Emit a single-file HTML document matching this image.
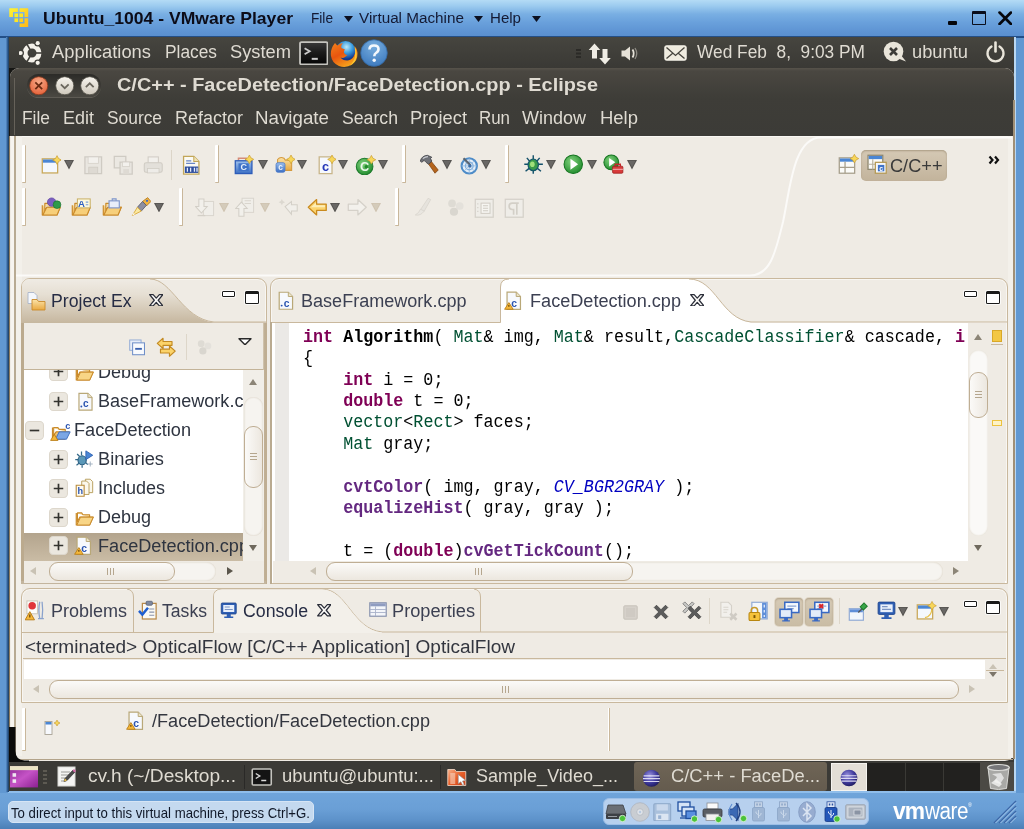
<!DOCTYPE html>
<html><head><meta charset="utf-8"><title>Ubuntu_1004 - VMware Player</title>
<style>
*{box-sizing:border-box;margin:0;padding:0}
html,body{width:1024px;height:829px;overflow:hidden}
html{background:#6198d2}
#root{position:absolute;left:0;top:0;width:1024px;height:829px;filter:blur(0.5px)}
body{background:#6198d2;font-family:"Liberation Sans",sans-serif;position:relative}
.a{position:absolute}
.t{position:absolute;white-space:pre;transform-origin:0 50%;display:block}
#vmtitle{left:0;top:0;width:1024px;height:37px;background:linear-gradient(#b4dbf5 0px,#9ccbef 6px,#79afe3 14px,#6aa1dc 22px,#5d93d3 32px,#5a8fcf 36px)}
#guest{left:8px;top:37px;width:1007px;height:755px;background:#3c3b37;overflow:hidden}
#panel{left:0;top:0;width:1007px;height:31px;background:linear-gradient(#46453f,#3a3935)}
#ewin{left:2px;top:31px;width:1004px;height:693px;background:#efebe4;border-radius:9px 9px 9px 9px;overflow:hidden}
#etitle{left:0;top:0;width:1004px;height:67.6px;background:linear-gradient(#57534b 0,#4a4741 3px,#3e3d38 30px,#3c3b37 100%)}
#tbar{left:0;top:724px;width:1007px;height:31px;background:#3b3a36}
.grip{position:absolute;width:4px;height:38px;background:#fff;border-right:1px solid #c9b79b;border-bottom:1px solid #c9b79b;border-radius:1px}
.code{position:absolute;left:303.4px;font-family:"Liberation Mono",monospace;font-size:18.8px;line-height:22px;white-space:pre;transform-origin:0 50%;transform:scaleX(0.8899);color:#000}
.k{color:#7f0055;font-weight:bold}.ty{color:#005032}.fn{color:#642880;font-weight:bold}.b{font-weight:bold}.en{color:#0000c0;font-style:italic}
.panelbox{position:absolute;border:1px solid #c5b59c;background:#efebe4}
</style></head><body><div id="root">
<div id="vmtitle" class="a"></div>
<div class="a" style="left:0;top:36px;width:1024px;height:1.5px;background:#234f88"></div>
<div id="guest" class="a">
  <div id="panel" class="a"></div>
  <div class="a" style="left:0;top:31px;width:14px;height:724px;background:#161614"></div>
  <div id="ewin" class="a">
    <div id="etitle" class="a"></div>
  </div>
  <div id="tbar" class="a"></div>
</div>
<!-- guest light edge -->
<div class="a" style="left:1014px;top:37px;width:2px;height:756px;background:#b9d7f2"></div>
<div class="a" style="left:8px;top:791px;width:1008px;height:2px;background:#8fbdea"></div>

<!-- everything below is in page coordinates -->
<div id="ov" class="a" style="left:0;top:0;width:1024px;height:829px">
<!-- content top highlight -->
<div class="a" style="left:10px;top:135.6px;width:1003px;height:1.6px;background:#f9f7f3"></div>
<div class="a" style="left:14px;top:78px;width:1.2px;height:57px;background:#66625a"></div>
<!-- eclipse window left/right edges -->
<div class="a" style="left:5.5px;top:37px;width:3.5px;height:755px;background:linear-gradient(90deg,#5b8fca,#2c5a8f 55%,#1d3a58)"></div>
<div class="a" style="left:8.7px;top:136px;width:1.8px;height:620px;background:#8a7a5e"></div>
<div class="a" style="left:10.5px;top:136px;width:3.5px;height:620px;background:#f7f4ef"></div>
<div class="a" style="left:14px;top:136px;width:1.5px;height:620px;background:#b8aa92"></div>
<div class="a" style="left:15.5px;top:136px;width:6px;height:620px;background:#f3f0ea"></div>
<div class="a" style="left:1008px;top:136px;width:5px;height:622px;background:#f3f0ea"></div>
<div class="a" style="left:1013px;top:100px;width:1.5px;height:659px;background:#a08f76"></div>
<div class="a" style="left:16px;top:758.5px;width:997px;height:1.5px;background:#b3a38a"></div>
<!-- perspective curve -->
<svg class="a" style="left:0;top:130px" width="1024" height="150" viewBox="0 130 1024 150">
 <path d="M16 275.5 L750 275.5 C771 275.5 776 250 783 222 C790 190 793 137.5 821 137.5 L1012 137.5" fill="none" stroke="#fbfaf8" stroke-width="2"/>
</svg>
<!-- toolbar grips -->
<div class="grip" style="left:22px;top:145px"></div>
<div class="grip" style="left:215px;top:145px"></div>
<div class="grip" style="left:402px;top:145px"></div>
<div class="grip" style="left:505px;top:145px"></div>
<div class="grip" style="left:22px;top:188px"></div>
<div class="grip" style="left:179px;top:188px"></div>
<div class="grip" style="left:395px;top:188px"></div>
<div class="a" style="left:171px;top:150px;width:1px;height:30px;background:#dcd5c8"></div>
<!-- C/C++ perspective button -->
<div class="a" style="left:861px;top:150px;width:86px;height:31px;border-radius:5px;background:linear-gradient(#d5c9b5,#c2b39b);box-shadow:inset 0 1px 2px #a89a82"></div>

<!-- ===== Project Explorer panel ===== -->
<div class="a" style="left:21px;top:278px;width:246px;height:306px;border:1px solid #c9b89d;border-radius:9px 9px 0 0;background:#efebe4;box-shadow:inset 0 0 0 1px #f8f6f2"></div>
<svg class="a" style="left:22px;top:279px" width="244" height="44" viewBox="0 0 244 44">
 <defs><linearGradient id="tg" x1="0" y1="0" x2="0" y2="1"><stop offset="0" stop-color="#efebe4"/><stop offset="0.35" stop-color="#e6dfd3"/><stop offset="1" stop-color="#c6b79f"/></linearGradient></defs>
 <path d="M0 44 L0 8 Q0 0 8 0 L128 0 C150 0 160 40 192 43.5 L244 43.5 L244 44 Z" fill="url(#tg)"/>
 <path d="M128 0 C150 0 160 40 192 43 L244 43" fill="none" stroke="#c9b89d" stroke-width="1"/>
</svg>
<div class="a" style="left:23px;top:368.5px;width:242px;height:1.5px;background:#c3b398"></div>
<div class="a" style="left:20.5px;top:323px;width:3.2px;height:261px;background:#bbaa8e"></div>
<div class="a" style="left:263px;top:323px;width:3.8px;height:261px;background:linear-gradient(90deg,#d6cbb8,#bfae93 40%)"></div>
<div class="a" style="left:21px;top:581px;width:245px;height:2.8px;background:#c3b59e"></div>
<div class="a" style="left:24px;top:370px;width:219px;height:191px;background:#fff"></div>
<div class="a" style="left:243px;top:370px;width:21px;height:191px;background:#f1eee8"></div>
<!-- selected row -->
<div class="a" style="left:24px;top:533px;width:219px;height:28px;background:linear-gradient(#b3a48d,#cabca5)"></div>
<!-- v scrollbar PE -->
<div class="a" style="left:244px;top:397px;width:19px;height:139px;border-radius:9px;background:#f6f4f0;box-shadow:inset 0 0 2px #cfc4b2"></div>
<div class="a" style="left:244px;top:426px;width:19px;height:62px;border-radius:9px;background:linear-gradient(90deg,#fbfaf8,#ece7df);border:1px solid #bfae94"></div>
<div class="a" style="left:250px;top:453px;width:7px;height:1px;background:#b5a68e;box-shadow:0 3px 0 #b5a68e,0 6px 0 #b5a68e"></div>
<div class="a" style="left:249px;top:379px;border:4px solid transparent;border-bottom:6px solid #8c8577;border-top:0"></div>
<div class="a" style="left:249px;top:545px;border:4px solid transparent;border-top:6px solid #6f695d;border-bottom:0"></div>
<!-- h scrollbar PE -->
<div class="a" style="left:24px;top:561px;width:240px;height:22px;background:#efebe4"></div>
<div class="a" style="left:49px;top:562px;width:167px;height:19px;border-radius:9px;background:#f6f4f0;box-shadow:inset 0 0 2px #cfc4b2"></div>
<div class="a" style="left:49px;top:562px;width:126px;height:19px;border-radius:9px;background:linear-gradient(#fbfaf8,#ece7df);border:1px solid #bfae94"></div>
<div class="a" style="left:107px;top:568px;width:1px;height:7px;background:#b5a68e;box-shadow:3px 0 0 #b5a68e,6px 0 0 #b5a68e"></div>
<div class="a" style="left:30px;top:567px;border:4px solid transparent;border-right:6px solid #c9c2b4;border-left:0"></div>
<div class="a" style="left:227px;top:567px;border:4px solid transparent;border-left:6px solid #5a554b;border-right:0"></div>

<!-- ===== Editor panel ===== -->
<div class="a" style="left:270px;top:278px;width:738px;height:306px;border:1px solid #c9b89d;border-radius:9px 9px 0 0;background:#efebe4;box-shadow:inset 0 0 0 1px #f8f6f2"></div>
<svg class="a" style="left:271px;top:279px" width="736" height="44" viewBox="0 0 736 44">
 <path d="M230 44 L230 8 Q230 0 238 0 L418 0 C445 0 450 40 480 43.5 L736 43.5 L736 44 Z" fill="#fff"/>
 <path d="M0 43.5 L229.5 43.5 L229.5 8 Q229.5 0 238 0 M418 0 C445 0 450 40 480 43 L736 43" fill="none" stroke="#c9b89d" stroke-width="1"/>
</svg>
<div class="a" style="left:273px;top:323px;width:732px;height:238px;background:#fff"></div>
<div class="a" style="left:275px;top:323px;width:14px;height:238px;background:#ebe9e6"></div>
<div class="a" style="left:968px;top:323px;width:38px;height:238px;background:#efebe4"></div>
<div class="a" style="left:272px;top:323px;width:2.5px;height:260px;background:#fff"></div>
<div class="a" style="left:272px;top:580.7px;width:734px;height:2.3px;background:#fff"></div>
<div class="a" style="left:270.300px;top:322px;width:1.7px;height:262px;background:#b9aa90"></div>
<!-- overview marks -->
<div class="a" style="left:992px;top:330px;width:10px;height:12px;background:#f3c743;border:1px solid #d9a827"></div>
<div class="a" style="left:991px;top:344px;width:12px;height:1px;background:#c9b89d"></div>
<div class="a" style="left:992px;top:420px;width:10px;height:6px;background:#fdf3c7;border:1.5px solid #ecc23f"></div>
<!-- v scrollbar editor -->
<div class="a" style="left:969px;top:350px;width:19px;height:186px;border-radius:9px;background:#faf9f7;box-shadow:inset 0 0 2px #d9d0c0"></div>
<div class="a" style="left:969px;top:372px;width:19px;height:46px;border-radius:9px;background:linear-gradient(90deg,#fbfaf8,#ece7df);border:1px solid #bfae94"></div>
<div class="a" style="left:975px;top:391px;width:7px;height:1px;background:#b5a68e;box-shadow:0 3px 0 #b5a68e,0 6px 0 #b5a68e"></div>
<div class="a" style="left:974px;top:334px;border:4px solid transparent;border-bottom:6px solid #8c8577;border-top:0"></div>
<div class="a" style="left:974px;top:545px;border:4px solid transparent;border-top:6px solid #6f695d;border-bottom:0"></div>
<!-- h scrollbar editor -->
<div class="a" style="left:273px;top:561px;width:732px;height:22px;background:#efebe4"></div>
<div class="a" style="left:326px;top:562px;width:617px;height:19px;border-radius:9px;background:#f6f4f0;box-shadow:inset 0 0 2px #cfc4b2"></div>
<div class="a" style="left:326px;top:562px;width:307px;height:19px;border-radius:9px;background:linear-gradient(#fbfaf8,#ece7df);border:1px solid #bfae94"></div>
<div class="a" style="left:475px;top:568px;width:1px;height:7px;background:#b5a68e;box-shadow:3px 0 0 #b5a68e,6px 0 0 #b5a68e"></div>
<div class="a" style="left:310px;top:567px;border:4px solid transparent;border-right:6px solid #c9c2b4;border-left:0"></div>
<div class="a" style="left:953px;top:567px;border:4px solid transparent;border-left:6px solid #8c8577;border-right:0"></div>

<!-- ===== Bottom panel ===== -->
<div class="a" style="left:21px;top:588px;width:987px;height:115px;border:1px solid #c9b89d;border-radius:9px 9px 0 0;background:#efebe4;box-shadow:inset 0 0 0 1px #f8f6f2"></div>
<svg class="a" style="left:22px;top:589px" width="985" height="44" viewBox="0 0 985 44">
 <path d="M0 43.5 L191.5 43.5 L191.5 8 Q191.5 0 200 0 L300 0 C325 0 330 40 360 43 L985 43" fill="none" stroke="#c9b89d" stroke-width="1"/>
 <path d="M111.5 43 L111.5 8 Q111.5 1 105 0 M458.5 43 L458.5 8 Q458.5 1 452 0" fill="none" stroke="#c9b89d" stroke-width="1"/>
 <path d="M192 44 L192 8 Q192 0.5 200 0.5 L300 0.5 C325 0.5 330 40 360 43.5 L360 44 Z" fill="#f3f0ea"/>
</svg>
<div class="a" style="left:23px;top:658px;width:983px;height:1px;background:#c9b89d"></div>
<div class="a" style="left:24px;top:660px;width:961px;height:19px;background:#fff"></div>
<div class="a" style="left:989px;top:664px;border:4px solid transparent;border-bottom:5px solid #c9c2b4;border-top:0"></div>
<div class="a" style="left:989px;top:672px;border:4px solid transparent;border-top:5px solid #7c766a;border-bottom:0"></div>
<div class="a" style="left:986px;top:670px;width:18px;height:1px;background:#c9b89d"></div>
<!-- h scrollbar console -->
<div class="a" style="left:49px;top:680px;width:910px;height:19px;border-radius:9px;background:linear-gradient(#fbfaf8,#ece7df);border:1px solid #bfae94"></div>
<div class="a" style="left:502px;top:686px;width:1px;height:7px;background:#b5a68e;box-shadow:3px 0 0 #b5a68e,6px 0 0 #b5a68e"></div>
<div class="a" style="left:33px;top:685px;border:4px solid transparent;border-right:6px solid #c9c2b4;border-left:0"></div>
<div class="a" style="left:969px;top:685px;border:4px solid transparent;border-left:6px solid #c9c2b4;border-right:0"></div>
<!-- status bar -->
<div class="grip" style="left:22px;top:708px;height:43px"></div>
<div class="a" style="left:608px;top:708px;width:2px;height:43px;background:#fff;border-right:1px solid #c9b79b"></div>

<svg class="a" style="left:8.5px;top:727px" width="20" height="35" viewBox="0 0 20 35"><path d="M0 0H6.500V24Q6.500 33 15.500 33.500H20V35H0Z" fill="#0b0b0a"/></svg>
<!-- ===== Taskbar ===== -->
<div class="a" style="left:634px;top:762px;width:193px;height:29px;background:linear-gradient(#6f6556,#645b4e);border-radius:3px"></div>
<div class="a" style="left:830.5px;top:763px;width:36.500px;height:28px;background:#e3ded6;border:1px solid #f5f3ef"></div>
<div class="a" style="left:867px;top:763px;width:113px;height:28px;background:#22211f"></div>
<div class="a" style="left:905px;top:763px;width:1px;height:28px;background:#3a3935"></div>
<div class="a" style="left:943px;top:763px;width:1px;height:28px;background:#3a3935"></div>
<div class="a" style="left:980px;top:762px;width:34px;height:29px;background:#4b4944"></div>
<div class="a" style="left:244px;top:765px;width:1px;height:24px;background:#2a2927"></div>
<div class="a" style="left:440px;top:765px;width:1px;height:24px;background:#2a2927"></div>
<div class="a" style="left:43px;top:770px;width:4px;height:2px;background:#5d5a52;box-shadow:0 4px 0 #5d5a52,0 8px 0 #5d5a52,0 12px 0 #5d5a52"></div>

<!-- ===== VMware status ===== -->
<div class="a" style="left:0;top:793px;width:1024px;height:36px;background:linear-gradient(#6fa4da 0,#6a9fd6 45%,#5d92ca 75%,#4b7fb6 100%)"></div>
<div class="a" style="left:8px;top:801px;width:306px;height:22px;border-radius:5px;background:#c4d9ef;border:1px solid #d6e5f5"></div>
<div class="a" style="left:603px;top:798px;width:266px;height:27px;border-radius:6px;background:#b7d0ee;border:1px solid #9dbfe6"></div>
<svg class="a" style="left:990px;top:795px" width="30" height="30" viewBox="0 0 30 30"><path d="M4 28 L26 6 M9 28 L26 11 M14 28 L26 16 M19 28 L26 21" stroke="#3d68a8" stroke-width="1.5"/><path d="M5.5 28 L26 7.5 M10.5 28 L26 12.5 M15.5 28 L26 17.5 M20.5 28 L26 22.5" stroke="#a9cdf0" stroke-width="1"/></svg>

<div class="a" style="left:289px;top:323px;width:679px;height:238px;overflow:hidden">
<div class="a" style="left:-289px;top:-323px;width:1024px;height:829px">
<div class="code" style="top:325.8px"><span class="k">int</span> <span class="b">Algorithm</span>( <span class="ty">Mat</span>&amp; img, <span class="ty">Mat</span>&amp; result,<span class="ty">CascadeClassifier</span>&amp; cascade, <span class="k">i</span></div>
<div class="code" style="top:347.2px">{</div>
<div class="code" style="top:368.6px">    <span class="k">int</span> i = 0;</div>
<div class="code" style="top:390px">    <span class="k">double</span> t = 0;</div>
<div class="code" style="top:411.4px">    <span class="ty">vector</span>&lt;<span class="ty">Rect</span>&gt; faces;</div>
<div class="code" style="top:432.8px">    <span class="ty">Mat</span> gray;</div>
<div class="code" style="top:475.6px">    <span class="fn">cvtColor</span>( img, gray, <span class="en">CV_BGR2GRAY</span> );</div>
<div class="code" style="top:497px">    <span class="fn">equalizeHist</span>( gray, gray );</div>
<div class="code" style="top:539.8px">    t = (<span class="k">double</span>)<span class="fn">cvGetTickCount</span>();</div>
</div></div>

<svg width="0" height="0" style="position:absolute"><defs>
<linearGradient id="gFold" x1="0" y1="0" x2="0" y2="1"><stop offset="0" stop-color="#fbe3a8"/><stop offset="1" stop-color="#e9a941"/></linearGradient>
<linearGradient id="gBlue" x1="0" y1="0" x2="0" y2="1"><stop offset="0" stop-color="#9dc0ec"/><stop offset="1" stop-color="#3c6fc4"/></linearGradient>
<radialGradient id="gGreen" cx="0.4" cy="0.35" r="0.7"><stop offset="0" stop-color="#7fd07a"/><stop offset="1" stop-color="#1f8a2c"/></radialGradient>
<radialGradient id="gOrb" cx="0.4" cy="0.3" r="0.8"><stop offset="0" stop-color="#b9b4ea"/><stop offset="0.5" stop-color="#4d47a8"/><stop offset="1" stop-color="#1d1a5c"/></radialGradient>
<linearGradient id="gPurp" x1="0" y1="0" x2="0" y2="1"><stop offset="0" stop-color="#c76ad0"/><stop offset="1" stop-color="#7a1f86"/></linearGradient>
</defs></svg>
<svg class="a" style="left:40.5px;top:154.5px" width="20.5" height="20.5" viewBox="0 0 16 16"><rect x="1" y="3" width="12" height="11" fill="#f4f8fd" stroke="#c9a85a" stroke-width="1"/><rect x="1.5" y="3.5" width="11" height="2.5" fill="#4a86d4"/><path d="M12.5 0.5l1.2 2.2 2.2 1.2-2.2 1.2-1.2 2.2-1.2-2.2-2.2-1.2 2.2-1.2z" fill="#f7d65a" stroke="#c8992a" stroke-width="0.5"/></svg>
<svg class="a" style="left:63.7px;top:160px" width="10" height="9.5" viewBox="0 0 10 9.500"><path d="M0 0h10l-5 9.500z" fill="#555350"/><path d="M1.500 0.800h7l-3.500 6.500z" fill="#ffffff" fill-opacity="0.12"/></svg>
<svg class="a" style="left:82.5px;top:155px" width="20.5" height="20.5" viewBox="0 0 16 16"><path d="M1.5 1.5h13v13h-13z" fill="#e9e6e0" stroke="#cfcbc3"/><rect x="4" y="1.5" width="8" height="5" fill="#f3f1ed" stroke="#d5d1c9" stroke-width="0.6"/><rect x="4.5" y="9.5" width="7" height="5" fill="#dedad3" stroke="#cfcbc3" stroke-width="0.6"/></svg>
<svg class="a" style="left:112.5px;top:155px" width="20.5" height="20.5" viewBox="0 0 16 16"><path d="M1 1h9v9h-9z" fill="#ebe8e2" stroke="#cfcbc3"/><path d="M5.5 5.5h9.5v9.5h-9.5z" fill="#e9e6e0" stroke="#cfcbc3"/><rect x="7.5" y="5.5" width="5.5" height="3.5" fill="#f3f1ed" stroke="#d5d1c9" stroke-width="0.6"/><rect x="8" y="11" width="4.5" height="4" fill="#dedad3"/></svg>
<svg class="a" style="left:142.5px;top:155px" width="20.5" height="20.5" viewBox="0 0 16 16"><rect x="4" y="1.5" width="8" height="5" fill="#f2f0ec" stroke="#d0ccc4" stroke-width="0.8"/><rect x="1" y="6" width="14" height="7.5" rx="1.5" fill="#e3e0da" stroke="#cfcbc3" stroke-width="0.8"/><rect x="3.5" y="10.5" width="9" height="3.5" fill="#eeece8" stroke="#d0ccc4" stroke-width="0.6"/></svg>
<svg class="a" style="left:180.5px;top:154.5px" width="20.5" height="20.5" viewBox="0 0 16 16"><path d="M2 1h8l4 4v10h-12z" fill="#fbfaf3" stroke="#c2a659" stroke-width="1"/><path d="M10 1v4h4" fill="#f0e3b4" stroke="#c2a659" stroke-width="0.8"/><path d="M4 4.5h4M4 6.5h7" stroke="#6a86c6" stroke-width="1"/><rect x="3" y="9" width="10.5" height="5" fill="#2f4f9e"/><path d="M5 10v3M7.5 10v3M10.5 10v3M12.5 10v3" stroke="#e6ecfa" stroke-width="1"/></svg>
<svg class="a" style="left:234px;top:154.5px" width="20.5" height="20.5" viewBox="0 0 16 16"><path d="M3.5 4.5v-2h6v2" fill="none" stroke="#d58b79" stroke-width="1.2"/><rect x="1" y="4.5" width="13" height="10" fill="url(#gBlue)" stroke="#2c5bb8" stroke-width="1"/><rect x="3.5" y="6.5" width="8" height="6" fill="#3f73c8"/><text x="7.5" y="12" font-family="Liberation Sans" font-weight="bold" font-size="7" fill="#e9f0fb" text-anchor="middle">C</text><path d="M12 0l1.2 2.2 2.2 1.2-2.2 1.2-1.2 2.2-1.2-2.2-2.2-1.2 2.2-1.2z" fill="#f7d65a" stroke="#c8992a" stroke-width="0.5"/></svg>
<svg class="a" style="left:257.5px;top:160px" width="10" height="9.5" viewBox="0 0 10 9.500"><path d="M0 0h10l-5 9.500z" fill="#555350"/><path d="M1.500 0.800h7l-3.500 6.500z" fill="#ffffff" fill-opacity="0.12"/></svg>
<svg class="a" style="left:274.5px;top:154.5px" width="20.5" height="20.5" viewBox="0 0 16 16"><path d="M2 3.5q2-2.5 5-1l1 1.5h5v8h-11z" fill="url(#gFold)" stroke="#d59a3e" stroke-width="0.8"/><rect x="0.8" y="6" width="7" height="7.5" rx="1.5" fill="url(#gBlue)" stroke="#4a79c9" stroke-width="0.6"/><text x="4.3" y="12" font-family="Liberation Sans" font-weight="bold" font-size="6.5" fill="#eef3fb" text-anchor="middle">c</text><path d="M12.5 0l1.2 2.2 2.2 1.2-2.2 1.2-1.2 2.2-1.2-2.2-2.2-1.2 2.2-1.2z" fill="#f7d65a" stroke="#c8992a" stroke-width="0.5"/></svg>
<svg class="a" style="left:297.4px;top:160px" width="10" height="9.5" viewBox="0 0 10 9.500"><path d="M0 0h10l-5 9.500z" fill="#555350"/><path d="M1.500 0.800h7l-3.500 6.500z" fill="#ffffff" fill-opacity="0.12"/></svg>
<svg class="a" style="left:315.5px;top:154.5px" width="20.5" height="20.5" viewBox="0 0 16 16"><path d="M2.5 1.5h10v13h-10z" fill="#f5f8fd" stroke="#c8b58a" stroke-width="1"/><text x="7.5" y="12.5" font-family="Liberation Sans" font-weight="bold" font-size="10" fill="#2436b8" text-anchor="middle">c</text><path d="M12.5 0l1.2 2.2 2.2 1.2-2.2 1.2-1.2 2.2-1.2-2.2-2.2-1.2 2.2-1.2z" fill="#f7d65a" stroke="#c8992a" stroke-width="0.5"/></svg>
<svg class="a" style="left:337.5px;top:160px" width="10" height="9.5" viewBox="0 0 10 9.500"><path d="M0 0h10l-5 9.500z" fill="#555350"/><path d="M1.500 0.800h7l-3.500 6.500z" fill="#ffffff" fill-opacity="0.12"/></svg>
<svg class="a" style="left:355px;top:154.5px" width="20.5" height="20.5" viewBox="0 0 16 16"><circle cx="7.5" cy="9" r="6.5" fill="url(#gGreen)" stroke="#1c7a2a" stroke-width="0.8"/><text x="7.5" y="12.6" font-family="Liberation Sans" font-weight="bold" font-size="10" fill="#eaf7ea" text-anchor="middle">C</text><circle cx="8.8" cy="9.2" r="1.3" fill="#1f8a2c"/><path d="M12.8 0.3l1.2 2.2 2.2 1.2-2.2 1.2-1.2 2.2-1.2-2.2-2.2-1.2 2.2-1.2z" fill="#f7d65a" stroke="#c8992a" stroke-width="0.5"/></svg>
<svg class="a" style="left:378px;top:160px" width="10" height="9.5" viewBox="0 0 10 9.500"><path d="M0 0h10l-5 9.500z" fill="#555350"/><path d="M1.500 0.800h7l-3.500 6.500z" fill="#ffffff" fill-opacity="0.12"/></svg>
<svg class="a" style="left:418.5px;top:153.5px" width="20.5" height="20.5" viewBox="0 0 16 16"><path d="M6.5 6.5l2-2 6.5 8-2.5 2.5z" fill="#b5651d" stroke="#7d4210" stroke-width="0.6"/><path d="M1 5.5q1-4 5.5-4.5l3.5 1.5-1 1 1 2-2.5 2.5-2-1.5-1.5-1.5-2 1.5z" fill="#6e7076" stroke="#3c3e44" stroke-width="0.6"/><path d="M3 3.5q2-1.5 4-1.5" stroke="#c9cbd1" stroke-width="0.9" fill="none"/></svg>
<svg class="a" style="left:442px;top:160px" width="10" height="9.5" viewBox="0 0 10 9.500"><path d="M0 0h10l-5 9.500z" fill="#555350"/><path d="M1.500 0.800h7l-3.500 6.500z" fill="#ffffff" fill-opacity="0.12"/></svg>
<svg class="a" style="left:459px;top:154.5px" width="20.5" height="20.5" viewBox="0 0 16 16"><circle cx="8" cy="8.5" r="6" fill="#e4eef8" stroke="#4e8cc8" stroke-width="1.6"/><circle cx="8" cy="8.5" r="3" fill="none" stroke="#7fb0de" stroke-width="1"/><path d="M8 2.5v12M2 8.5h12M4 4.5l8 8M12 4.5l-8 8" stroke="#8db5dc" stroke-width="0.6"/><path d="M3.5 2.5l5.5 5.5" stroke="#5a6470" stroke-width="1.6"/><circle cx="8.5" cy="8.5" r="1.3" fill="#3b6ea8"/></svg>
<svg class="a" style="left:481px;top:160px" width="10" height="9.5" viewBox="0 0 10 9.500"><path d="M0 0h10l-5 9.500z" fill="#555350"/><path d="M1.500 0.800h7l-3.500 6.500z" fill="#ffffff" fill-opacity="0.12"/></svg>
<svg class="a" style="left:523px;top:154px" width="20.5" height="20.5" viewBox="0 0 16 16"><path d="M8 1v3M3 3l2.5 3M13 3l-2.5 3M1 8h3M12 8h3.5M2 13.5l3-2.5M14 13.5l-3-2.5M8 13v2.5" stroke="#14506a" stroke-width="1.1"/><ellipse cx="8" cy="8.5" rx="4" ry="4.5" fill="#3a9a4a" stroke="#145a6a" stroke-width="1"/><ellipse cx="7.3" cy="8" rx="1.8" ry="2.2" fill="#9fe07a"/></svg>
<svg class="a" style="left:546px;top:160px" width="10" height="9.5" viewBox="0 0 10 9.500"><path d="M0 0h10l-5 9.500z" fill="#555350"/><path d="M1.500 0.800h7l-3.500 6.500z" fill="#ffffff" fill-opacity="0.12"/></svg>
<svg class="a" style="left:563px;top:154px" width="20.5" height="20.5" viewBox="0 0 16 16"><circle cx="8" cy="8" r="7.2" fill="url(#gGreen)" stroke="#14741f" stroke-width="0.8"/><path d="M5.8 3.8l6 4.2-6 4.2z" fill="#fff"/></svg>
<svg class="a" style="left:586.8px;top:160px" width="10" height="9.5" viewBox="0 0 10 9.500"><path d="M0 0h10l-5 9.500z" fill="#555350"/><path d="M1.500 0.800h7l-3.500 6.500z" fill="#ffffff" fill-opacity="0.12"/></svg>
<svg class="a" style="left:603px;top:154px" width="20.5" height="20.5" viewBox="0 0 16 16"><circle cx="6.5" cy="6.5" r="5.8" fill="url(#gGreen)" stroke="#14741f" stroke-width="0.8"/><path d="M4.8 3.2l4.8 3.3-4.8 3.3z" fill="#fff"/><path d="M9.5 9.5v-1.5h4v1.5" fill="none" stroke="#c62a2a" stroke-width="1.1"/><rect x="7.5" y="9.5" width="8" height="5.5" rx="0.8" fill="#d83a3a" stroke="#9c1a1a" stroke-width="0.6"/><rect x="7.5" y="11.5" width="8" height="1" fill="#f09a9a"/></svg>
<svg class="a" style="left:627px;top:160px" width="10" height="9.5" viewBox="0 0 10 9.500"><path d="M0 0h10l-5 9.500z" fill="#555350"/><path d="M1.500 0.800h7l-3.500 6.500z" fill="#ffffff" fill-opacity="0.12"/></svg>
<svg class="a" style="left:838px;top:154px" width="20.5" height="20.5" viewBox="0 0 16 16"><rect x="1" y="3" width="12" height="12" fill="#fbfbf8" stroke="#a79f8c" stroke-width="1"/><rect x="1.5" y="3.5" width="11" height="2.5" fill="#4a86d4"/><path d="M5.5 6v9M1 10.5h12" stroke="#a79f8c" stroke-width="1"/><path d="M12.8 0.2l1.2 2.2 2.2 1.2-2.2 1.2-1.2 2.2-1.2-2.2-2.2-1.2 2.2-1.2z" fill="#f7d65a" stroke="#c8992a" stroke-width="0.5"/></svg>
<svg class="a" style="left:866.5px;top:154px" width="20.5" height="20.5" viewBox="0 0 16 16"><rect x="0.8" y="1" width="11.5" height="11" fill="#fbfbf8" stroke="#8f8870" stroke-width="1"/><rect x="1.3" y="1.5" width="10.5" height="2.5" fill="#4a86d4"/><path d="M4.5 4v8M1 8h11" stroke="#b7b09c" stroke-width="0.9"/><rect x="6.5" y="6.5" width="8.5" height="8.5" fill="#f5f8fd" stroke="#b59a55" stroke-width="1"/><rect x="8.5" y="8.5" width="5" height="5" fill="#3f73c8"/><text x="11" y="13" font-family="Liberation Sans" font-weight="bold" font-size="5.5" fill="#fff" text-anchor="middle">c</text></svg>
<svg class="a" style="left:41px;top:196.5px" width="20.5" height="20.5" viewBox="0 0 16 16"><path d="M1 6.5v7.5h11.5l2.5-6h-10.5l-1.5 2.5v-5.5h3l1 1.5h5v1.5" fill="url(#gFold)" stroke="#c98a2a" stroke-width="0.9" stroke-linejoin="round"/><path d="M1.5 14l3-6h10.5l-2.5 6z" fill="#f7cf7a" stroke="#c98a2a" stroke-width="0.8"/><circle cx="8.3" cy="4" r="3.3" fill="#7b5fc0" stroke="#5a3fa0" stroke-width="0.5"/><circle cx="12.5" cy="6" r="3" fill="#2f9a4a" stroke="#1a7030" stroke-width="0.5"/></svg>
<svg class="a" style="left:71px;top:196.5px" width="20.5" height="20.5" viewBox="0 0 16 16"><path d="M1 6.5v7.5h11.5l2.5-6h-10.5l-1.5 2.5v-5.5h3l1 1.5h5v1.5" fill="url(#gFold)" stroke="#c98a2a" stroke-width="0.9" stroke-linejoin="round"/><path d="M1.5 14l3-6h10.5l-2.5 6z" fill="#f7cf7a" stroke="#c98a2a" stroke-width="0.8"/><rect x="5" y="1.5" width="10" height="7" fill="#fdf9e0" stroke="#c9b067" stroke-width="0.8"/><text x="8.2" y="8" font-family="Liberation Sans" font-weight="bold" font-size="7.5" fill="#2f5fc0" text-anchor="middle">A</text><path d="M11.5 4h2M11.5 6h2" stroke="#7aa0d8" stroke-width="0.8"/></svg>
<svg class="a" style="left:101.5px;top:196.5px" width="20.5" height="20.5" viewBox="0 0 16 16"><path d="M1 6.5v7.5h11.5l2.5-6h-10.5l-1.5 2.5v-5.5h3l1 1.5h5v1.5" fill="url(#gFold)" stroke="#c98a2a" stroke-width="0.9" stroke-linejoin="round"/><path d="M1.5 14l3-6h10.5l-2.5 6z" fill="#f7cf7a" stroke="#c98a2a" stroke-width="0.8"/><rect x="5.5" y="3" width="8" height="5.5" fill="#e8eefa" stroke="#7f97cc" stroke-width="0.9"/><path d="M8 3v-1.5h3v1.5" fill="none" stroke="#7f97cc" stroke-width="0.9"/></svg>
<svg class="a" style="left:130.5px;top:197px" width="20.5" height="20.5" viewBox="0 0 16 16"><path d="M9 3.5l4-3 2.5 3-3.5 3.5z" fill="#f0b340" stroke="#b97a1a" stroke-width="0.7"/><path d="M5 8l4-4.5 3 3-4 4.5z" fill="#8d8fa0" stroke="#5c5e70" stroke-width="0.7"/><path d="M1 14.5l4-6.5 3 3z" fill="#fbe9a0" stroke="#d8a83a" stroke-width="0.7"/><path d="M1 14.5l2-1-1-1z" fill="#fff"/><circle cx="12.5" cy="3" r="0.9" fill="#3a6ac8"/></svg>
<svg class="a" style="left:154px;top:202.5px" width="10" height="9.5" viewBox="0 0 10 9.500"><path d="M0 0h10l-5 9.500z" fill="#555350"/><path d="M1.500 0.800h7l-3.500 6.500z" fill="#ffffff" fill-opacity="0.12"/></svg>
<svg class="a" style="left:195px;top:197px" width="20.5" height="20.5" viewBox="0 0 16 16"><rect x="6.5" y="3.5" width="8" height="11" fill="#f0eee9" stroke="#dad6ce" stroke-width="0.8"/><path d="M3 1.5h4v6h2.5l-4.5 5-4.5-5h2.5z" fill="#f2f0eb" stroke="#d3cfc7" stroke-width="0.8"/><path d="M2 14.5h6" stroke="#d3cfc7" stroke-width="1"/></svg>
<svg class="a" style="left:219px;top:202.5px" width="10" height="9.5" viewBox="0 0 10 9.500"><path d="M0 0h10l-5 9.500z" fill="#cfc4b1"/><path d="M1.500 0.800h7l-3.500 6.500z" fill="#ffffff" fill-opacity="0.12"/></svg>
<svg class="a" style="left:235px;top:197px" width="20.5" height="20.5" viewBox="0 0 16 16"><rect x="5.5" y="1" width="9" height="11" fill="#f0eee9" stroke="#dad6ce" stroke-width="0.8"/><path d="M7.5 3h5M7.5 5h5" stroke="#d9d5cd" stroke-width="0.8"/><path d="M3 15h4v-6h2.5l-4.5-5-4.5 5h2.5z" fill="#f2f0eb" stroke="#d3cfc7" stroke-width="0.8"/></svg>
<svg class="a" style="left:259.5px;top:202.5px" width="10" height="9.5" viewBox="0 0 10 9.500"><path d="M0 0h10l-5 9.500z" fill="#cfc4b1"/><path d="M1.500 0.800h7l-3.500 6.500z" fill="#ffffff" fill-opacity="0.12"/></svg>
<svg class="a" style="left:277.5px;top:197px" width="20.5" height="20.5" viewBox="0 0 16 16"><path d="M6.5 9l5-4v2.5h4.5v5h-4.5v2.5z" fill="#f1efea" stroke="#d3cfc7" stroke-width="0.8" transform="translate(-1 -1.5)"/><path d="M3 1.5l.8 1.7 1.7.8-1.7.8-.8 1.7-.8-1.7-1.700-.8 1.700-.8z" fill="#dcd8d0"/></svg>
<svg class="a" style="left:307px;top:197px" width="20.5" height="20.5" viewBox="0 0 16 16"><path d="M1 8l6.500-6v3.500h7.500v5h-7.500v3.500z" fill="#fbd470" stroke="#c98a1e" stroke-width="1" stroke-linejoin="round"/><path d="M3 8l4-3.500v2h7v1.5z" fill="#fdeeb8"/></svg>
<svg class="a" style="left:330px;top:202.5px" width="10" height="9.5" viewBox="0 0 10 9.500"><path d="M0 0h10l-5 9.500z" fill="#555350"/><path d="M1.500 0.800h7l-3.500 6.500z" fill="#ffffff" fill-opacity="0.12"/></svg>
<svg class="a" style="left:346.5px;top:197px" width="20.5" height="20.5" viewBox="0 0 16 16"><path d="M15 8l-6.500-6v3.500h-7.500v5h7.500v3.500z" fill="#f3f1ec" stroke="#d5d1c9" stroke-width="1" stroke-linejoin="round"/></svg>
<svg class="a" style="left:370.5px;top:202.5px" width="10" height="9.5" viewBox="0 0 10 9.500"><path d="M0 0h10l-5 9.500z" fill="#cfc4b1"/><path d="M1.500 0.800h7l-3.500 6.500z" fill="#ffffff" fill-opacity="0.12"/></svg>
<svg class="a" style="left:413.5px;top:197px" width="20.5" height="20.5" viewBox="0 0 16 16"><path d="M11 1l2 1-5 9-3-1z" fill="#e6e3dd" stroke="#d8d4cc" stroke-width="0.6"/><path d="M1 14q4 1 7-3l-3-1.500q-1 3-4 4.500z" fill="#e9e6e0" stroke="#d8d4cc" stroke-width="0.6"/></svg>
<svg class="a" style="left:444.5px;top:197px" width="20.5" height="20.5" viewBox="0 0 16 16"><circle cx="5.5" cy="5" r="3" fill="#dedbd4"/><circle cx="11.5" cy="7" r="3" fill="#e4e1db"/><circle cx="7" cy="11.500" r="3.200" fill="#d9d6cf"/></svg>
<svg class="a" style="left:474px;top:197.5px" width="20.5" height="20.5" viewBox="0 0 16 16"><rect x="1" y="1" width="14" height="14" fill="#efede8" stroke="#d5d1c9" stroke-width="1"/><rect x="5.500" y="4" width="7" height="8" fill="#f6f5f1" stroke="#d0ccc4" stroke-width="0.8"/><path d="M3 4v1M3 7v1M3 10v1M7 6h4M7 8h4M7 10h4" stroke="#d0ccc4" stroke-width="0.8"/></svg>
<svg class="a" style="left:504px;top:197.5px" width="20.5" height="20.5" viewBox="0 0 16 16"><rect x="1" y="1" width="14" height="14" fill="#efede8" stroke="#d5d1c9" stroke-width="1"/><path d="M11.500 4h-5q-2.500 0-2.500 2.500t2.500 2.500h1v4M10 4v9" fill="none" stroke="#d3cfc7" stroke-width="1.300"/></svg>
<svg class="a" style="left:988px;top:155px" width="13" height="10" viewBox="0 0 13 10"><path d="M1.500 1.500l3 3.500-3 3.500M7 1.500l3 3.500-3 3.500" fill="none" stroke="#111" stroke-width="2.200"/></svg>
<svg class="a" style="left:9px;top:7.5px" width="19.5" height="19.5" viewBox="0 0 19 19"><defs><linearGradient id="vy" x1="0" y1="0" x2="1" y2="1"><stop offset="0" stop-color="#fff533"/><stop offset="1" stop-color="#ffb81a"/></linearGradient></defs>
<path d="M0.300 0.300h8.400v3.600h-4.800v4.800h-3.600z M10.300 0.300h8.400v8.400h-3.600v-4.800h-4.800z M18.700 10h-3.600v5.100h-4.800v3.600h8.400z" fill="url(#vy)"/>
<rect x="5.300" y="5.300" width="3.600" height="3.600" fill="#ffee22"/><rect x="10.100" y="5.300" width="3.600" height="3.600" fill="#ffe522"/><rect x="5.300" y="10.100" width="3.600" height="3.600" fill="#ffe522"/><rect x="10.100" y="10.100" width="3.600" height="3.600" fill="#ffd21e"/></svg>
<svg class="a" style="left:344px;top:15.5px" width="9" height="6" viewBox="0 0 9 6"><path d="M0 0h9l-4.500 6z" fill="#0c1020"/></svg>
<svg class="a" style="left:473.5px;top:15.5px" width="9" height="6" viewBox="0 0 9 6"><path d="M0 0h9l-4.500 6z" fill="#0c1020"/></svg>
<svg class="a" style="left:532px;top:15.5px" width="9" height="6" viewBox="0 0 9 6"><path d="M0 0h9l-4.500 6z" fill="#0c1020"/></svg>
<div class="a" style="left:947.5px;top:20.5px;width:9.5px;height:4.5px;background:#05060c;border-radius:1px"></div>
<div class="a" style="left:971.5px;top:10.5px;width:14px;height:14px;border:1.5px solid #0a0e1c;border-top-width:3px;border-radius:1px"></div>
<svg class="a" style="left:997.5px;top:10.5px" width="14.5" height="14.5" viewBox="0 0 14 14"><path d="M1.500 1.500l11 11M12.500 1.500l-11 11" stroke="#05060c" stroke-width="2.600" stroke-linecap="round"/></svg>
<svg class="a" style="left:18.5px;top:39.6px" width="26" height="26" viewBox="0 0 26 26"><circle cx="13" cy="13" r="7" fill="none" stroke="#f4f1ea" stroke-width="5"/>
<g stroke="#403f3a" stroke-width="1.600"><path d="M16.00 13.00L24.00 13.00"/><path d="M11.50 10.40L7.50 3.47"/><path d="M11.50 15.60L7.50 22.53"/></g><circle cx="1.70" cy="13.00" r="3.300" fill="#403f3a"/><circle cx="18.65" cy="3.21" r="3.300" fill="#403f3a"/><circle cx="18.65" cy="22.79" r="3.300" fill="#403f3a"/><circle cx="1.60" cy="13.00" r="2.100" fill="#f4f1ea"/><circle cx="18.70" cy="3.13" r="2.100" fill="#f4f1ea"/><circle cx="18.70" cy="22.87" r="2.100" fill="#f4f1ea"/></svg>
<svg class="a" style="left:298.5px;top:40.5px" width="29.5" height="24.5" viewBox="0 0 29 24"><defs><linearGradient id="tb" x1="0" y1="0" x2="0" y2="1"><stop offset="0" stop-color="#3a3a3a"/><stop offset="0.450" stop-color="#1c1c1c"/><stop offset="1" stop-color="#050505"/></linearGradient></defs>
<rect x="1" y="1" width="27" height="22" rx="1.500" fill="url(#tb)" stroke="#c4c3be" stroke-width="1.800"/>
<path d="M5.500 7l5 3-5 3" fill="none" stroke="#c9c9c9" stroke-width="1.800"/><path d="M12.500 17.500h6" stroke="#c9c9c9" stroke-width="2"/></svg>
<svg class="a" style="left:328.5px;top:37.5px" width="30" height="30" viewBox="0 0 30 30"><defs><radialGradient id="ffg" cx="0.550" cy="0.300" r="0.600"><stop offset="0" stop-color="#bfeaf8"/><stop offset="0.500" stop-color="#3b9de0"/><stop offset="1" stop-color="#12388c"/></radialGradient>
<linearGradient id="ffo" x1="0" y1="0" x2="0.600" y2="1"><stop offset="0" stop-color="#f2821c"/><stop offset="0.500" stop-color="#e8550f"/><stop offset="1" stop-color="#f6a41c"/></linearGradient></defs>
<circle cx="16.500" cy="13" r="10" fill="url(#ffg)"/>
<path d="M6 5q-5 6-4 13t8 10q7 2.500 13-1.500t5.500-12q-0.500-4-2.500-6q1 5-0.500 8q-1.500 5-6.500 6q-5 0.500-7.500-3q2.500 1 4.500-0.500l2.500-2q-2 0-3-1.500q-1.500-1.500 0.500-4l-3.500-1.500q-1-2.500 1.500-5q-3 0-5.500 2.500q-1.500-1-2-2z" fill="url(#ffo)"/>
<path d="M25.500 8q3 5 2 11t-7 9q5-5 5.500-10t-0.500-10z" fill="#fbc732"/></svg>
<svg class="a" style="left:359.5px;top:38.5px" width="28" height="28" viewBox="0 0 28 28"><defs><radialGradient id="hg" cx="0.500" cy="0.250" r="0.800"><stop offset="0" stop-color="#78aede"/><stop offset="1" stop-color="#3b78bd"/></radialGradient></defs><circle cx="14" cy="14" r="13.300" fill="url(#hg)" stroke="#34679f" stroke-width="0.800"/>
<path d="M9.500 10.500q0-4 4.500-4t4.500 3.500q0 2.500-2.500 4q-1.700 1-1.700 3.200" fill="none" stroke="#f4f8fc" stroke-width="2.600"/><circle cx="14.200" cy="21.300" r="1.700" fill="#f4f8fc"/></svg>
<div class="a" style="left:576px;top:49px;width:5px;height:2px;background:#2b2a27;box-shadow:0 3.500px 0 #2b2a27,0 7px 0 #2b2a27"></div>
<svg class="a" style="left:588px;top:42.5px" width="24" height="22" viewBox="0 0 24 22"><path d="M6.500 0.500l5.800 6.500h-3.300v8.500h-5v-8.500h-3.300z" fill="#efece4"/><path d="M17 21.500l-5.800-6.500h3.300v-9h5v9h3.300z" fill="#efece4"/></svg>
<svg class="a" style="left:621px;top:45.5px" width="18" height="15" viewBox="0 0 18 15"><path d="M0.500 4.500h3.500l5-4v14l-5-4h-3.500z" fill="#e6e2d8"/><path d="M11.500 3.500q2.500 4 0 8" fill="none" stroke="#e6e2d8" stroke-width="1.800"/><path d="M14 2q3.500 5.500 0 11" fill="none" stroke="#8f8c84" stroke-width="1.300"/></svg>
<svg class="a" style="left:663.5px;top:44.5px" width="23" height="16" viewBox="0 0 23 16"><rect x="0.800" y="0.800" width="21.400" height="14.400" rx="1.500" fill="#efebdf" stroke="#f6f3ea" stroke-width="1"/><path d="M2.500 2.500l9 8 9-8M2.500 13.500l6.500-5.500M20.500 13.500l-6.500-5.500" fill="none" stroke="#46443e" stroke-width="1.300"/></svg>
<svg class="a" style="left:883px;top:40.5px" width="24" height="23" viewBox="0 0 24 23"><circle cx="10.500" cy="10.500" r="9.800" fill="#e9e5da"/><path d="M14 17l9 3.500-5.500-7z" fill="#e9e5da"/><path d="M7 7l7 7M14 7l-7 7" stroke="#3d3c38" stroke-width="2.600"/></svg>
<svg class="a" style="left:984.5px;top:40.5px" width="21" height="22" viewBox="0 0 21 22"><path d="M6.500 5.500a8 8 0 1 0 8 0" fill="none" stroke="#e9e5da" stroke-width="2.300" stroke-linecap="round"/><path d="M10.500 1.500v9" stroke="#e9e5da" stroke-width="2.600" stroke-linecap="round"/></svg>
<div class="a" style="left:27px;top:74px;width:74px;height:23px;border-radius:12px;background:linear-gradient(#2c2b28,#4a4842);box-shadow:0 1px 0 #5e5b54"></div>
<svg class="a" style="left:29px;top:75.5px" width="19.5" height="19.5" viewBox="0 0 20 20"><defs><radialGradient id="cl" cx="0.500" cy="0.300" r="0.700"><stop offset="0" stop-color="#f8aa88"/><stop offset="1" stop-color="#e4623a"/></radialGradient></defs><circle cx="10" cy="10" r="9.300" fill="url(#cl)" stroke="#8c3a1c" stroke-width="0.800"/><path d="M6.500 6.500l7 7M13.500 6.500l-7 7" stroke="#6a2a12" stroke-width="1.800"/></svg>
<svg class="a" style="left:54.5px;top:75.5px" width="19.5" height="19.5" viewBox="0 0 20 20"><defs><linearGradient id="gb" x1="0" y1="0" x2="0" y2="1"><stop offset="0" stop-color="#f7f4ee"/><stop offset="1" stop-color="#cfc9bd"/></linearGradient></defs><circle cx="10" cy="10" r="9.300" fill="url(#gb)" stroke="#55524a" stroke-width="0.800"/><path d="M6 8.500l4 4 4-4" fill="none" stroke="#6b675e" stroke-width="1.800"/></svg>
<svg class="a" style="left:79.5px;top:75.5px" width="19.5" height="19.5" viewBox="0 0 20 20"><circle cx="10" cy="10" r="9.300" fill="url(#gb)" stroke="#55524a" stroke-width="0.800"/><path d="M6 11.500l4-4 4 4" fill="none" stroke="#6b675e" stroke-width="1.800"/></svg>
<div class="a" style="left:221.5px;top:291px;width:13px;height:5.500px;border:1.500px solid #1a1a1a;background:#fff;border-radius:1px;box-shadow:0 0 0 1px rgba(255,255,255,.7)"></div>
<div class="a" style="left:245px;top:291px;width:13.500px;height:13px;border:1.500px solid #1a1a1a;border-top-width:3px;background:#fff;border-radius:1.500px;box-shadow:0 0 0 1px rgba(255,255,255,.7)"></div>
<div class="a" style="left:964px;top:291px;width:13px;height:5.500px;border:1.500px solid #1a1a1a;background:#fff;border-radius:1px;box-shadow:0 0 0 1px rgba(255,255,255,.7)"></div>
<div class="a" style="left:986px;top:291px;width:13.500px;height:13px;border:1.500px solid #1a1a1a;border-top-width:3px;background:#fff;border-radius:1.500px;box-shadow:0 0 0 1px rgba(255,255,255,.7)"></div>
<div class="a" style="left:964px;top:601px;width:13px;height:5.500px;border:1.500px solid #1a1a1a;background:#fff;border-radius:1px;box-shadow:0 0 0 1px rgba(255,255,255,.7)"></div>
<div class="a" style="left:986px;top:601px;width:13.500px;height:13px;border:1.500px solid #1a1a1a;border-top-width:3px;background:#fff;border-radius:1.500px;box-shadow:0 0 0 1px rgba(255,255,255,.7)"></div>
<svg class="a" style="left:148.8px;top:293.8px" width="14.5" height="12.5" viewBox="0 0 14 12"><path d="M0.600 0.600h3.400l3 3.300 3-3.300h3.400l-4.500 5.400 4.500 5.400h-3.400l-3-3.300-3 3.300h-3.400l4.500-5.400z" fill="#fbfaf8" stroke="#2a2d38" stroke-width="1.200" stroke-linejoin="round"/></svg>
<svg class="a" style="left:689.5px;top:293.8px" width="14.5" height="12.5" viewBox="0 0 14 12"><path d="M0.600 0.600h3.400l3 3.300 3-3.300h3.400l-4.500 5.400 4.500 5.400h-3.400l-3-3.300-3 3.300h-3.400l4.500-5.400z" fill="#fbfaf8" stroke="#2a2d38" stroke-width="1.200" stroke-linejoin="round"/></svg>
<svg class="a" style="left:316.5px;top:604px" width="14.5" height="12.5" viewBox="0 0 14 12"><path d="M0.600 0.600h3.400l3 3.300 3-3.300h3.400l-4.500 5.400 4.500 5.400h-3.400l-3-3.300-3 3.300h-3.400l4.500-5.400z" fill="#fbfaf8" stroke="#2a2d38" stroke-width="1.200" stroke-linejoin="round"/></svg>
<svg class="a" style="left:27px;top:291px" width="19" height="20" viewBox="0 0 19 20"><path d="M1 1.500h6l3 3v8h-9z" fill="#f4f7fc" stroke="#a9b4c9" stroke-width="0.900"/><path d="M5 8.500h5l1.500 2h6.500v8.500h-13z" fill="url(#gFold)" stroke="#c98a2a" stroke-width="0.900"/></svg>
<svg class="a" style="left:128.5px;top:338.5px" width="16.5" height="17" viewBox="0 0 16 16"><rect x="0.700" y="0.700" width="11" height="10" fill="#e6edf8" stroke="#8fa8d4" stroke-width="0.900"/><rect x="3.500" y="3.500" width="11.500" height="11.500" fill="#f8fafd" stroke="#6f8fc8" stroke-width="1"/><path d="M6 9.300h6.500" stroke="#3a62b0" stroke-width="1.800"/></svg>
<svg class="a" style="left:155.5px;top:337px" width="20.5" height="20.5" viewBox="0 0 16 16"><path d="M1 5l4.500-4v2.500h7v3h-7v2.500z" fill="#fbd36a" stroke="#c38a22" stroke-width="0.900" stroke-linejoin="round"/><path d="M15 11l-4.500-4v2.500h-7v3h7v2.500z" fill="#fbd36a" stroke="#c38a22" stroke-width="0.900" stroke-linejoin="round"/></svg>
<div class="a" style="left:186px;top:334px;width:1px;height:26px;background:#ddd6c9"></div>
<svg class="a" style="left:195px;top:338px" width="18" height="18" viewBox="0 0 16 16"><circle cx="5.5" cy="5" r="3" fill="#dedbd4"/><circle cx="11.5" cy="7" r="3" fill="#e4e1db"/><circle cx="7" cy="11.500" r="3.200" fill="#d9d6cf"/></svg>
<svg class="a" style="left:238px;top:337.5px" width="14" height="7.5" viewBox="0 0 14 7.500"><path d="M1 0.800h12l-6 6z" fill="#fff" stroke="#2a2a2a" stroke-width="1.400" stroke-linejoin="round"/></svg>
<div class="a" style="left:24px;top:370px;width:219px;height:191px;overflow:hidden"><div class="a" style="left:-24px;top:-370px;width:400px;height:700px">
<svg class="a" style="left:48.5px;top:362.0px" width="19" height="19" viewBox="0 0 18 18"><rect x="0.500" y="0.500" width="17" height="17" rx="3.500" fill="#ebe7df" stroke="#ddd7cc" stroke-width="1"/><path d="M4.500 9h9M9 4.500v9" stroke="#33332f" stroke-width="1.600"/></svg>
<svg class="a" style="left:48.5px;top:391.5px" width="19" height="19" viewBox="0 0 18 18"><rect x="0.500" y="0.500" width="17" height="17" rx="3.500" fill="#ebe7df" stroke="#ddd7cc" stroke-width="1"/><path d="M4.500 9h9M9 4.500v9" stroke="#33332f" stroke-width="1.600"/></svg>
<svg class="a" style="left:25.0px;top:420.5px" width="19" height="19" viewBox="0 0 18 18"><rect x="0.500" y="0.500" width="17" height="17" rx="3.500" fill="#ebe7df" stroke="#ddd7cc" stroke-width="1"/><path d="M4.500 9h9" stroke="#33332f" stroke-width="1.600"/></svg>
<svg class="a" style="left:48.5px;top:449.5px" width="19" height="19" viewBox="0 0 18 18"><rect x="0.500" y="0.500" width="17" height="17" rx="3.500" fill="#ebe7df" stroke="#ddd7cc" stroke-width="1"/><path d="M4.500 9h9M9 4.500v9" stroke="#33332f" stroke-width="1.600"/></svg>
<svg class="a" style="left:48.5px;top:478.5px" width="19" height="19" viewBox="0 0 18 18"><rect x="0.500" y="0.500" width="17" height="17" rx="3.500" fill="#ebe7df" stroke="#ddd7cc" stroke-width="1"/><path d="M4.500 9h9M9 4.500v9" stroke="#33332f" stroke-width="1.600"/></svg>
<svg class="a" style="left:48.5px;top:507.5px" width="19" height="19" viewBox="0 0 18 18"><rect x="0.500" y="0.500" width="17" height="17" rx="3.500" fill="#ebe7df" stroke="#ddd7cc" stroke-width="1"/><path d="M4.500 9h9M9 4.500v9" stroke="#33332f" stroke-width="1.600"/></svg>
<svg class="a" style="left:48.5px;top:536.0px" width="19" height="19" viewBox="0 0 18 18"><rect x="0.500" y="0.500" width="17" height="17" rx="3.500" fill="#ebe7df" stroke="#ddd7cc" stroke-width="1"/><path d="M4.500 9h9M9 4.500v9" stroke="#33332f" stroke-width="1.600"/></svg>
<svg class="a" style="left:75px;top:362.5px" width="19.5" height="19.5" viewBox="0 0 16 16"><path d="M1 4v10h11l3-6.500h-11l-2 3.500v-7h3.500l1 1.500h5.500v2" fill="url(#gFold)" stroke="#c98a2a" stroke-width="0.900" stroke-linejoin="round"/><path d="M1.500 14l3-6.500h10.500l-3 6.500z" fill="#f8d586" stroke="#c98a2a" stroke-width="0.800"/></svg>
<svg class="a" style="left:75.5px;top:392px" width="19" height="19.5" viewBox="0 0 16 16"><path d="M2.500 1h7.500l3.500 3.500v10.500h-11z" fill="#f7f9fd" stroke="#b9a878" stroke-width="1"/><path d="M10 1v3.500h3.500" fill="#ebe3c8" stroke="#b9a878" stroke-width="0.800"/><text x="8.300" y="12.800" font-family="Liberation Sans" font-weight="bold" font-size="8.500" fill="#2c55b0" text-anchor="middle">c</text><circle cx="4.500" cy="12" r="0.800" fill="#2c55b0"/></svg>
<svg class="a" style="left:50px;top:420.5px" width="22" height="20.5" viewBox="0 0 18 16"><path d="M2 5v9.500h10l3.500-6h-10.500l-2 3v-6.500h3.500l1 1.500h5v2" fill="url(#gFold)" stroke="#c98a2a" stroke-width="0.900" stroke-linejoin="round"/><path d="M4.500 14.500l3-6h9l-3 6z" fill="#7ba6e4" stroke="#3f6fc0" stroke-width="0.800"/><text x="14.500" y="6.500" font-family="Liberation Sans" font-weight="bold" font-size="7.500" fill="#2c55b0" text-anchor="middle">c</text><path d="M3.500 10.500l3 5h-6z" fill="#f5b83a" stroke="#b87a12" stroke-width="0.700"/></svg>
<svg class="a" style="left:74px;top:449px" width="20" height="20" viewBox="0 0 16 16"><path d="M6 2v3M2.500 4l2 2M1 8.500h2.500M2 13l2.500-2M6.500 13v2M11 12.500l-1.500-1.500" stroke="#356a8a" stroke-width="1"/><ellipse cx="6.500" cy="9" rx="3.300" ry="3.600" fill="#5a98b8" stroke="#2c5f80" stroke-width="0.900"/><path d="M9.500 1.500l5.500 3.500-5.500 3.500z" fill="#4a86d4" stroke="#2c5fb0" stroke-width="0.700"/><path d="M13 10v4M11 12h4" stroke="#9ab" stroke-width="0.700"/></svg>
<svg class="a" style="left:75px;top:478px" width="19.5" height="19.5" viewBox="0 0 16 16"><path d="M8.500 1h4l2 2v9h-6z" fill="#fbf8ec" stroke="#b9a060" stroke-width="0.800"/><path d="M5.500 2.500h4l2 2v9h-6z" fill="#fbf8ec" stroke="#b9a060" stroke-width="0.800"/><path d="M1 6h6.500v9h-6.500z" fill="#fdfbf2" stroke="#b98a3a" stroke-width="0.900"/><text x="4.300" y="13.500" font-family="Liberation Sans" font-weight="bold" font-size="7.500" fill="#2c55b0" text-anchor="middle">h</text></svg>
<svg class="a" style="left:75px;top:508px" width="19.5" height="19.5" viewBox="0 0 16 16"><path d="M1 4v10h11l3-6.500h-11l-2 3.500v-7h3.500l1 1.500h5.500v2" fill="url(#gFold)" stroke="#c98a2a" stroke-width="0.900" stroke-linejoin="round"/><path d="M1.500 14l3-6.500h10.500l-3 6.500z" fill="#f8d586" stroke="#c98a2a" stroke-width="0.800"/></svg>
<svg class="a" style="left:74px;top:535.5px" width="19.5" height="19.5" viewBox="0 0 16 16"><path d="M2.500 1h7.500l3.500 3.500v10.500h-11z" fill="#f7f9fd" stroke="#b9a878" stroke-width="1"/><path d="M10 1v3.500h3.500" fill="#ebe3c8" stroke="#b9a878" stroke-width="0.800"/><text x="8.300" y="12.800" font-family="Liberation Sans" font-weight="bold" font-size="8.500" fill="#2c55b0" text-anchor="middle">c</text><circle cx="4.500" cy="12" r="0.800" fill="#2c55b0"/><path d="M4 9.500l3.500 5.500h-7z" fill="#f5b83a" stroke="#b87a12" stroke-width="0.700"/><path d="M4 11.500v1.500" stroke="#5a3a08" stroke-width="0.900"/></svg>
</div></div>
<svg class="a" style="left:278px;top:291px" width="17" height="19.5" viewBox="0 0 14 16"><path d="M1 1h7.500l3.500 3.500v10.500h-11z" fill="#f7f9fd" stroke="#b9a878" stroke-width="1"/><path d="M8.500 1v3.500h3.500" fill="#ebe3c8" stroke="#b9a878" stroke-width="0.800"/><text x="7" y="12.800" font-family="Liberation Sans" font-weight="bold" font-size="8.500" fill="#2c55b0" text-anchor="middle">c</text><circle cx="3" cy="12" r="0.800" fill="#2c55b0"/></svg>
<svg class="a" style="left:503.5px;top:291px" width="19.5" height="19.5" viewBox="0 0 16 16"><path d="M2.500 1h7.500l3.500 3.500v10.500h-11z" fill="#f7f9fd" stroke="#b9a878" stroke-width="1"/><path d="M10 1v3.500h3.500" fill="#ebe3c8" stroke="#b9a878" stroke-width="0.800"/><text x="8.300" y="12.800" font-family="Liberation Sans" font-weight="bold" font-size="8.500" fill="#2c55b0" text-anchor="middle">c</text><circle cx="4.500" cy="12" r="0.800" fill="#2c55b0"/><path d="M4 9.500l3.500 5.500h-7z" fill="#f5b83a" stroke="#b87a12" stroke-width="0.700"/><path d="M4 11.500v1.500" stroke="#5a3a08" stroke-width="0.900"/></svg>
<svg class="a" style="left:25px;top:600px" width="19" height="21" viewBox="0 0 16 18"><rect x="1.500" y="0.800" width="9" height="11" fill="#fdfdfb" stroke="#c9c3b4" stroke-width="0.800"/><circle cx="6" cy="5" r="3.200" fill="#e0353a"/><path d="M12.500 1.500q-1.500 7 0 14.500M14.500 1.500q1 7 0 14.500M11 16h5" fill="none" stroke="#8aa2cc" stroke-width="1.100"/><path d="M4 10l4 7h-8z" fill="#f5b83a" stroke="#b87a12" stroke-width="0.800"/><path d="M4 12.500v2.500" stroke="#5a3a08" stroke-width="1"/></svg>
<svg class="a" style="left:137.5px;top:599.5px" width="20" height="20.5" viewBox="0 0 16 16"><rect x="3.500" y="2.500" width="11" height="12.500" fill="#fbfaf5" stroke="#b98a4a" stroke-width="1"/><rect x="6.500" y="0.800" width="5" height="3.200" rx="0.800" fill="#7f8aa0" stroke="#565f74" stroke-width="0.600"/><path d="M9 7h4M9 9.500h4M9 12h4" stroke="#8a94ac" stroke-width="0.900"/><path d="M0.800 8.500l2.700 3 4.500-5.500" fill="none" stroke="#1f5fd0" stroke-width="2"/></svg>
<svg class="a" style="left:219.5px;top:601.5px" width="17.5" height="17" viewBox="0 0 17 17"><rect x="1" y="1" width="15" height="11" rx="1" fill="#2f5fb4" stroke="#1f458c" stroke-width="0.800"/><rect x="3" y="3" width="11" height="7" fill="#e9f0fb"/><path d="M4.500 5h5M4.500 7.500h8" stroke="#7a94c4" stroke-width="1"/><path d="M6.500 12v2.500h-2.500v1.500h9v-1.500h-2.500v-2.500z" fill="#2f5fb4"/></svg>
<svg class="a" style="left:368.5px;top:602px" width="18" height="15" viewBox="0 0 18 15"><rect x="0.800" y="0.800" width="16.400" height="13.400" fill="#f4f6fa" stroke="#7f8aa8" stroke-width="1.100"/><rect x="1.300" y="1.300" width="15.400" height="3" fill="#8f9cc0"/><path d="M1 7.500h16M1 10.500h16M6.500 4.500v9.500" stroke="#a9b2c9" stroke-width="0.900"/></svg>
<svg class="a" style="left:623px;top:604.5px" width="15" height="15" viewBox="0 0 15 15"><rect x="0.800" y="0.800" width="13.400" height="13.400" rx="1" fill="#d6d1ca" stroke="#c7c2ba" stroke-width="1"/><rect x="3" y="3" width="9" height="9" fill="#cfcac3"/></svg>
<svg class="a" style="left:652px;top:603px" width="18" height="18" viewBox="0 0 16 15"><path d="M2 3.500l2-2 4 4 4-4 2 2-4 4 4 4-2 2-4-4-4 4-2-2 4-4z" fill="#5c5c5c" stroke="#4a4a4a" stroke-width="0.800"/></svg>
<svg class="a" style="left:680.5px;top:599.5px" width="15" height="15" viewBox="0 0 16 15"><path d="M2 3.500l2-2 4 4 4-4 2 2-4 4 4 4-2 2-4-4-4 4-2-2 4-4z" fill="#c9c9c6" stroke="#6a6a6a" stroke-width="0.800"/></svg>
<svg class="a" style="left:686px;top:604px" width="17" height="17" viewBox="0 0 16 15"><path d="M2 3.500l2-2 4 4 4-4 2 2-4 4 4 4-2 2-4-4-4 4-2-2 4-4z" fill="#5c5c5c" stroke="#4a4a4a" stroke-width="0.800"/></svg>
<div class="a" style="left:709px;top:598px;width:1px;height:26px;background:#ddd6c9"></div>
<svg class="a" style="left:719px;top:601px" width="20" height="20" viewBox="0 0 16 16"><path d="M1.500 1h6l2.500 2.500v9.500h-8.500z" fill="#f2f0ec" stroke="#d5d1c9" stroke-width="0.900"/><path d="M3.500 5h4M3.500 7h4M3.500 9h3" stroke="#d9d5cd" stroke-width="0.800"/><path d="M9 10l5 5M14 10l-5 5" stroke="#cfcbc4" stroke-width="2"/></svg>
<svg class="a" style="left:748px;top:600.5px" width="20.5" height="20.5" viewBox="0 0 16 16"><rect x="3" y="1" width="12" height="13" fill="#f3f7fc" stroke="#8fa8d4" stroke-width="0.900"/><rect x="11" y="1.500" width="3.500" height="12" fill="#5f8ed8"/><path d="M12.700 3v2M12.700 7v2M12.700 11v1.500" stroke="#e6eefb" stroke-width="1"/><path d="M2.500 9.500v-2q0-2.500 2.500-2.500t2.500 2.500v2" fill="none" stroke="#c8992a" stroke-width="1.200"/><rect x="0.800" y="9" width="8.500" height="6.300" rx="1" fill="#f5c23a" stroke="#b8860f" stroke-width="0.800"/><rect x="4.300" y="11" width="1.500" height="2.300" fill="#7a5606"/></svg>
<div class="a" style="left:774.5px;top:597.500px;width:28.500px;height:28px;border-radius:4px;background:linear-gradient(#d6cab6,#c9bca5);box-shadow:inset 0 1px 2px #b0a188,0 0 0 1px #e0d7c7"></div>
<div class="a" style="left:804.5px;top:597.500px;width:28.500px;height:28px;border-radius:4px;background:linear-gradient(#d6cab6,#c9bca5);box-shadow:inset 0 1px 2px #b0a188,0 0 0 1px #e0d7c7"></div>
<svg class="a" style="left:779px;top:601px" width="20.5" height="20.5" viewBox="0 0 16 16"><rect x="4.500" y="1" width="11" height="8" fill="#f5f8fd" stroke="#3a6ac4" stroke-width="1.200"/><path d="M6.500 4h7M6.500 6h5" stroke="#8aa4d4" stroke-width="0.900"/><rect x="0.800" y="6.500" width="9" height="6.500" fill="#e4ecf9" stroke="#3a6ac4" stroke-width="1.200"/><path d="M4 13v2h-1.500v1h6v-1h-1.500v-2" fill="#3a6ac4"/></svg>
<svg class="a" style="left:809px;top:601px" width="20.5" height="20.5" viewBox="0 0 16 16"><rect x="4.500" y="1" width="11" height="8" fill="#f5f8fd" stroke="#3a6ac4" stroke-width="1.200"/><path d="M6.500 4h7M6.500 6h5" stroke="#8aa4d4" stroke-width="0.900"/><rect x="0.800" y="6.500" width="9" height="6.500" fill="#e4ecf9" stroke="#3a6ac4" stroke-width="1.200"/><path d="M4 13v2h-1.500v1h6v-1h-1.500v-2" fill="#3a6ac4"/><path d="M8 2.500l3 3M11 2.500l-3 3" stroke="#d8262a" stroke-width="1.600"/></svg>
<div class="a" style="left:839px;top:598px;width:1px;height:26px;background:#ddd6c9"></div>
<svg class="a" style="left:847.5px;top:601px" width="20.5" height="20.5" viewBox="0 0 16 16"><rect x="1" y="6" width="11" height="9" fill="#f2f6fc" stroke="#8fa8d4" stroke-width="0.900"/><rect x="1.500" y="6.500" width="10" height="2.300" fill="#5f8ed8"/><path d="M8 9l3-3" stroke="#555" stroke-width="1"/><path d="M9.500 4.500l3-3 2.500 2.500-3 3z" fill="#3aa648" stroke="#1d7a2a" stroke-width="0.800"/></svg>
<svg class="a" style="left:876.5px;top:600.5px" width="19" height="19" viewBox="0 0 17 17"><rect x="1" y="1" width="15" height="11" rx="1" fill="#2f5fb4" stroke="#1f458c" stroke-width="0.800"/><rect x="3" y="3" width="11" height="7" fill="#e9f0fb"/><path d="M4.500 5h5M4.500 7.500h8" stroke="#7a94c4" stroke-width="1"/><path d="M6.500 12v2.500h-2.500v1.500h9v-1.500h-2.500v-2.500z" fill="#2f5fb4"/></svg>
<svg class="a" style="left:898px;top:607px" width="10" height="9.5" viewBox="0 0 10 9.500"><path d="M0 0h10l-5 9.500z" fill="#555350"/><path d="M1.500 0.800h7l-3.500 6.500z" fill="#ffffff" fill-opacity="0.12"/></svg>
<svg class="a" style="left:916px;top:600.5px" width="20.5" height="20.5" viewBox="0 0 16 16"><rect x="1" y="3" width="12" height="11" fill="#f4f8fd" stroke="#c9a85a" stroke-width="1"/><rect x="1.500" y="3.500" width="11" height="2.500" fill="#4a86d4"/><path d="M7 13q5-1 5.500-7" fill="none" stroke="#e9c24a" stroke-width="1"/><path d="M12.5 0.3l1.2 2.2 2.2 1.2-2.2 1.2-1.2 2.2-1.2-2.2-2.2-1.2 2.2-1.2z" fill="#f7d65a" stroke="#c8992a" stroke-width="0.5"/></svg>
<svg class="a" style="left:938.5px;top:607px" width="10" height="9.5" viewBox="0 0 10 9.500"><path d="M0 0h10l-5 9.500z" fill="#555350"/><path d="M1.500 0.800h7l-3.500 6.500z" fill="#ffffff" fill-opacity="0.12"/></svg>
<svg class="a" style="left:44px;top:718.5px" width="18" height="17" viewBox="0 0 18 17"><rect x="1" y="2.500" width="7" height="13" fill="#f7f9fd" stroke="#a8a294" stroke-width="0.900"/><rect x="1.500" y="3" width="6" height="2.500" fill="#4a86d4"/><path d="M13 1l1 2 2 1-2 1-1 2-1-2-2-1 2-1z" fill="#f7d65a" stroke="#c8992a" stroke-width="0.600"/></svg>
<svg class="a" style="left:125.5px;top:710.5px" width="19.5" height="19.5" viewBox="0 0 16 16"><path d="M2.500 1h7.500l3.500 3.500v10.500h-11z" fill="#f7f9fd" stroke="#b9a878" stroke-width="1"/><path d="M10 1v3.500h3.500" fill="#ebe3c8" stroke="#b9a878" stroke-width="0.800"/><text x="8.300" y="12.800" font-family="Liberation Sans" font-weight="bold" font-size="8.500" fill="#2c55b0" text-anchor="middle">c</text><circle cx="4.500" cy="12" r="0.800" fill="#2c55b0"/><path d="M4 9.500l3.500 5.500h-7z" fill="#f5b83a" stroke="#b87a12" stroke-width="0.700"/><path d="M4 11.500v1.500" stroke="#5a3a08" stroke-width="0.900"/></svg>
<svg class="a" style="left:9.5px;top:766px" width="28.5" height="21.5" viewBox="0 0 28 21"><defs><linearGradient id="sd" x1="0" y1="0" x2="1" y2="1"><stop offset="0" stop-color="#8e2a96"/><stop offset="0.500" stop-color="#c553c6"/><stop offset="1" stop-color="#8a1f90"/></linearGradient></defs><rect x="0" y="0" width="28" height="21" fill="url(#sd)"/><rect x="0" y="0" width="28" height="4" fill="#ece5c6"/><rect x="2.500" y="7" width="3.500" height="3.500" fill="#f0e6f2"/><rect x="2.500" y="13" width="3.500" height="3.500" fill="#f0e6f2"/></svg>
<svg class="a" style="left:57px;top:766px" width="20" height="21" viewBox="0 0 20 21"><rect x="1" y="1" width="17" height="19" fill="#f4f4f2" stroke="#d9d9d5" stroke-width="1"/><path d="M4 6h9M4 9h8M4 12h6M4 15h5" stroke="#9a9a96" stroke-width="1"/><path d="M7 15.500l1-3 8-8.500 2 2-8 8.500z" fill="#4a4a4a" stroke="#222" stroke-width="0.600"/><path d="M7 15.500l1-3 2 2z" fill="#f0c24a"/><path d="M15.500 4.500l1.500-1.500 2 2-1.500 1.500z" fill="#d46aa8"/></svg>
<svg class="a" style="left:251px;top:767.5px" width="21.5" height="18" viewBox="0 0 21 18"><rect x="1" y="1" width="19" height="16" rx="1" fill="#141414" stroke="#c4c3be" stroke-width="1.600"/><path d="M4.500 5.500l4 2.500-4 2.500" fill="none" stroke="#d9d9d9" stroke-width="1.400"/><path d="M10 12.500h5" stroke="#d9d9d9" stroke-width="1.500"/></svg>
<svg class="a" style="left:446.5px;top:767.5px" width="20.5" height="19" viewBox="0 0 20 19"><defs><linearGradient id="vf" x1="0" y1="0" x2="1" y2="1"><stop offset="0" stop-color="#f6b08a"/><stop offset="0.500" stop-color="#e8602a"/><stop offset="1" stop-color="#c83a12"/></linearGradient></defs><path d="M0.500 1.500h7l1.500 2h9.500v14h-18z" fill="url(#vf)" stroke="#f4dccc" stroke-width="0.800"/><rect x="3" y="5" width="5" height="11" fill="#f7d4c0" opacity="0.600"/><path d="M11 6.500l7.500 6-3.200 0.500 1.700 3.500-1.700 0.800-1.700-3.500-2.600 2z" fill="#fff" stroke="#8a8a8a" stroke-width="0.600"/></svg>
<svg class="a" style="left:642px;top:768.5px" width="19" height="18.5" viewBox="0 0 20 20"><defs><radialGradient id="ec" cx="0.400" cy="0.350" r="0.750"><stop offset="0" stop-color="#9a94e0"/><stop offset="0.550" stop-color="#3f3a9c"/><stop offset="1" stop-color="#16134e"/></radialGradient></defs><circle cx="10" cy="10" r="9.300" fill="url(#ec)"/><path d="M1.500 7.500h17M0.800 10.500h18.400M1.500 13.500h17" stroke="#e9e7f8" stroke-width="1.300" opacity="0.900"/></svg>
<svg class="a" style="left:839.5px;top:768.5px" width="18" height="18" viewBox="0 0 20 20"><defs><radialGradient id="ec2" cx="0.400" cy="0.350" r="0.750"><stop offset="0" stop-color="#9a94e0"/><stop offset="0.550" stop-color="#3f3a9c"/><stop offset="1" stop-color="#16134e"/></radialGradient></defs><circle cx="10" cy="10" r="9.300" fill="url(#ec2)"/><path d="M1.500 7.500h17M0.800 10.500h18.400M1.500 13.500h17" stroke="#e9e7f8" stroke-width="1.300" opacity="0.900"/></svg>
<svg class="a" style="left:986px;top:763px" width="25" height="27" viewBox="0 0 25 27"><path d="M2 4.500l2.500 21q8 2 16 0l2.500-21z" fill="#a9a9a6" stroke="#d9d9d6" stroke-width="1"/><ellipse cx="12.500" cy="4.500" rx="10.800" ry="3" fill="#77777a" stroke="#dcdcd9" stroke-width="1.200"/><path d="M6 11l5 3-3 5 6 2 4-6-3-5z" fill="#e8e8e6" opacity="0.850"/><path d="M5 20l5-4 6 5-3 3z" fill="#f4f4f2" opacity="0.800"/></svg>
<svg class="a" style="left:605px;top:801.5px" width="22" height="21" viewBox="0 0 22 21"><path d="M3 3h15l3 9h-20z" fill="#6a6e74" stroke="#3c3f44" stroke-width="0.800"/><rect x="1" y="12" width="20" height="5" rx="1" fill="#3c3f44"/><path d="M3 14.500h9" stroke="#9a9ea4" stroke-width="1"/><circle cx="17.5" cy="16.5" r="3.200" fill="#4bc23a" stroke="#e9f6e6" stroke-width="0.800"/></svg>
<svg class="a" style="left:629.5px;top:801.5px" width="20" height="20" viewBox="0 0 20 20"><circle cx="10" cy="10" r="9.300" fill="#c9cdd2" stroke="#aeb4bc" stroke-width="0.800"/><circle cx="10" cy="10" r="3.300" fill="#dfe3e8" stroke="#b4bac2" stroke-width="0.800"/><circle cx="10" cy="10" r="1.200" fill="#b7c9e0"/></svg>
<svg class="a" style="left:653px;top:802.5px" width="18.5" height="18.5" viewBox="0 0 18 18"><rect x="0.800" y="0.800" width="16.400" height="16.400" rx="1" fill="#a9c0dc" stroke="#8ca6c8" stroke-width="1"/><rect x="3.500" y="1.300" width="11" height="6" fill="#c9d8ec"/><rect x="3" y="10.500" width="12" height="6.200" fill="#dbe5f2"/><rect x="5" y="12" width="3" height="3.500" fill="#9ab2d2"/></svg>
<svg class="a" style="left:676.5px;top:801px" width="22" height="22" viewBox="0 0 22 22"><rect x="1" y="1" width="12" height="9" fill="#d6e4f6" stroke="#1f4fa0" stroke-width="1.300"/><rect x="5" y="6" width="12" height="9" fill="#d6e4f6" stroke="#1f4fa0" stroke-width="1.300"/><rect x="9" y="10" width="10" height="7.500" fill="#5a8fe0" stroke="#1f4fa0" stroke-width="1.300"/><path d="M3 17h6" stroke="#1f4fa0" stroke-width="1.300"/><circle cx="17.5" cy="18" r="3.200" fill="#4bc23a" stroke="#e9f6e6" stroke-width="0.800"/></svg>
<svg class="a" style="left:702px;top:801.5px" width="21" height="21" viewBox="0 0 21 21"><rect x="5" y="1" width="11" height="6" fill="#fafafa" stroke="#8a8e94" stroke-width="0.800"/><rect x="1" y="7" width="19" height="8" rx="1.500" fill="#5a5e64" stroke="#36393e" stroke-width="0.800"/><rect x="4" y="12" width="13" height="6.500" fill="#f2f2f0" stroke="#8a8e94" stroke-width="0.800"/><circle cx="16.5" cy="17.5" r="3.200" fill="#4bc23a" stroke="#e9f6e6" stroke-width="0.800"/></svg>
<svg class="a" style="left:725.5px;top:800.5px" width="22" height="22" viewBox="0 0 22 22"><path d="M3 8h3.500l5.500-5.500v17l-5.500-5.500h-3.500z" fill="#3a68b4" stroke="#1f3f80" stroke-width="0.800"/><path d="M10 2q8 9 0 18" fill="none" stroke="#1f3f80" stroke-width="1.300"/><path d="M6 3q-6 8 0 16" fill="none" stroke="#5a8ad0" stroke-width="1.100"/><circle cx="17.5" cy="17.5" r="3.200" fill="#4bc23a" stroke="#e9f6e6" stroke-width="0.800"/></svg>
<svg class="a" style="left:751px;top:801px" width="15" height="21" viewBox="0 0 15 21"><rect x="3.500" y="0.800" width="8" height="6" fill="#c4d3e6" stroke="#8aa4c6" stroke-width="0.800"/><rect x="5.300" y="2.500" width="1.500" height="2" fill="#8aa4c6"/><rect x="8.200" y="2.500" width="1.500" height="2" fill="#8aa4c6"/><rect x="1.500" y="6.500" width="12" height="13.500" rx="1.500" fill="#9fb6d4" stroke="#8aa4c6" stroke-width="0.800"/><path d="M7.500 9v8M7.500 14l-2.500-2v-1.500M7.500 15.500l2.500-2v-1.500" fill="none" stroke="#c9d8ea" stroke-width="1"/></svg>
<svg class="a" style="left:775.5px;top:801px" width="15" height="21" viewBox="0 0 15 21"><rect x="3.500" y="0.800" width="8" height="6" fill="#c4d3e6" stroke="#8aa4c6" stroke-width="0.800"/><rect x="5.300" y="2.500" width="1.500" height="2" fill="#8aa4c6"/><rect x="8.200" y="2.500" width="1.500" height="2" fill="#8aa4c6"/><rect x="1.500" y="6.500" width="12" height="13.500" rx="1.500" fill="#9fb6d4" stroke="#8aa4c6" stroke-width="0.800"/><path d="M7.500 9v8M7.500 14l-2.500-2v-1.500M7.500 15.500l2.500-2v-1.500" fill="none" stroke="#c9d8ea" stroke-width="1"/></svg>
<svg class="a" style="left:797.5px;top:800.5px" width="18" height="22" viewBox="0 0 18 22"><ellipse cx="9" cy="11" rx="8.300" ry="10.300" fill="#97acd0" stroke="#8098c0" stroke-width="0.800"/><path d="M5 7l8 8-4 4v-16l4 4-8 8" fill="none" stroke="#dbe4f2" stroke-width="1.500"/></svg>
<svg class="a" style="left:823px;top:800.5px" width="18" height="22" viewBox="0 0 18 22"><rect x="4" y="0.800" width="8" height="6" fill="#dfe8f6" stroke="#2a50a0" stroke-width="0.800"/><rect x="5.800" y="2.500" width="1.500" height="2" fill="#2a50a0"/><rect x="8.700" y="2.500" width="1.500" height="2" fill="#2a50a0"/><rect x="2" y="6.500" width="12" height="14" rx="1.500" fill="#2456b8" stroke="#143a86" stroke-width="0.800"/><path d="M8 9v8M8 14l-2.500-2v-1.500M8 15.500l2.500-2v-1.500" fill="none" stroke="#e6eefb" stroke-width="1"/><circle cx="14" cy="18" r="3.200" fill="#4bc23a" stroke="#e9f6e6" stroke-width="0.800"/></svg>
<svg class="a" style="left:845px;top:803.5px" width="21" height="16" viewBox="0 0 21 16"><rect x="0.800" y="0.800" width="19.400" height="14.400" rx="1" fill="#c4cad2" stroke="#9aa2ae" stroke-width="1"/><rect x="3" y="3" width="15" height="10" fill="#aab2be" stroke="#dfe3e8" stroke-width="0.800"/><rect x="9" y="6" width="7" height="5" fill="#8a94a4" stroke="#e6e9ee" stroke-width="0.700"/></svg>
<span class="t" style="left:43px;top:7.0px;font-size:17px;line-height:23px;color:#0c0c18;font-family:'Liberation Sans', sans-serif;transform:scaleX(1.0336);font-weight:bold">Ubuntu_1004 - VMware Player</span>
<span class="t" style="left:311px;top:7.2px;font-size:15.5px;line-height:21.5px;color:#141a33;font-family:'Liberation Sans', sans-serif;transform:scaleX(0.8806);">File</span>
<span class="t" style="left:359px;top:7.2px;font-size:15.5px;line-height:21.5px;color:#141a33;font-family:'Liberation Sans', sans-serif;transform:scaleX(0.9853);">Virtual Machine</span>
<span class="t" style="left:490px;top:7.2px;font-size:15.5px;line-height:21.5px;color:#141a33;font-family:'Liberation Sans', sans-serif;transform:scaleX(0.9721);">Help</span>
<span class="t" style="left:52px;top:40.0px;font-size:18px;line-height:24px;color:#dfdbd2;font-family:'Liberation Sans', sans-serif;transform:scaleX(1.0200);">Applications</span>
<span class="t" style="left:165px;top:40.0px;font-size:18px;line-height:24px;color:#dfdbd2;font-family:'Liberation Sans', sans-serif;transform:scaleX(0.9624);">Places</span>
<span class="t" style="left:230px;top:40.0px;font-size:18px;line-height:24px;color:#dfdbd2;font-family:'Liberation Sans', sans-serif;transform:scaleX(1.0164);">System</span>
<span class="t" style="left:697px;top:40.0px;font-size:18px;line-height:24px;color:#dfdbd2;font-family:'Liberation Sans', sans-serif;transform:scaleX(0.9613);">Wed Feb  8,  9:03 PM</span>
<span class="t" style="left:912px;top:40.0px;font-size:18px;line-height:24px;color:#dfdbd2;font-family:'Liberation Sans', sans-serif;transform:scaleX(1.0170);">ubuntu</span>
<span class="t" style="left:117px;top:73.0px;font-size:18px;line-height:24px;color:#dfdbd2;font-family:'Liberation Sans', sans-serif;transform:scaleX(1.1054);font-weight:bold">C/C++ - FaceDetection/FaceDetection.cpp - Eclipse</span>
<span class="t" style="left:22px;top:105.5px;font-size:18px;line-height:24px;color:#dfdbd2;font-family:'Liberation Sans', sans-serif;transform:scaleX(0.9650);">File</span>
<span class="t" style="left:63px;top:105.5px;font-size:18px;line-height:24px;color:#dfdbd2;font-family:'Liberation Sans', sans-serif;transform:scaleX(0.9990);">Edit</span>
<span class="t" style="left:107px;top:105.5px;font-size:18px;line-height:24px;color:#dfdbd2;font-family:'Liberation Sans', sans-serif;transform:scaleX(0.9641);">Source</span>
<span class="t" style="left:175px;top:105.5px;font-size:18px;line-height:24px;color:#dfdbd2;font-family:'Liberation Sans', sans-serif;transform:scaleX(0.9995);">Refactor</span>
<span class="t" style="left:255px;top:105.5px;font-size:18px;line-height:24px;color:#dfdbd2;font-family:'Liberation Sans', sans-serif;transform:scaleX(1.0416);">Navigate</span>
<span class="t" style="left:342px;top:105.5px;font-size:18px;line-height:24px;color:#dfdbd2;font-family:'Liberation Sans', sans-serif;transform:scaleX(0.9816);">Search</span>
<span class="t" style="left:410px;top:105.5px;font-size:18px;line-height:24px;color:#dfdbd2;font-family:'Liberation Sans', sans-serif;transform:scaleX(1.0173);">Project</span>
<span class="t" style="left:479px;top:105.5px;font-size:18px;line-height:24px;color:#dfdbd2;font-family:'Liberation Sans', sans-serif;transform:scaleX(0.9385);">Run</span>
<span class="t" style="left:522px;top:105.5px;font-size:18px;line-height:24px;color:#dfdbd2;font-family:'Liberation Sans', sans-serif;transform:scaleX(0.9995);">Window</span>
<span class="t" style="left:600px;top:105.5px;font-size:18px;line-height:24px;color:#dfdbd2;font-family:'Liberation Sans', sans-serif;transform:scaleX(1.0262);">Help</span>
<span class="t" style="left:889.5px;top:154.0px;font-size:18px;line-height:24px;color:#3a3a3a;font-family:'Liberation Sans', sans-serif;transform:scaleX(1.0090);">C/C++</span>
<span class="t" style="left:50.5px;top:288.5px;font-size:18px;line-height:24px;color:#262c44;font-family:'Liberation Sans', sans-serif;transform:scaleX(0.9813);">Project Ex</span>
<span class="t" style="left:301px;top:288.5px;font-size:18px;line-height:24px;color:#3c4052;font-family:'Liberation Sans', sans-serif;transform:scaleX(1.0027);">BaseFramework.cpp</span>
<span class="t" style="left:529.5px;top:288.5px;font-size:18px;line-height:24px;color:#3c4052;font-family:'Liberation Sans', sans-serif;transform:scaleX(1.0060);">FaceDetection.cpp</span>
<div class="a" style="left:24px;top:370px;width:219px;height:191px;overflow:hidden"><div class="a" style="left:-24px;top:-370px;width:1024px;height:829px"><span class="t" style="left:98px;top:360.0px;font-size:18px;line-height:24px;color:#2e3440;font-family:'Liberation Sans', sans-serif;transform:scaleX(0.9991);">Debug</span></div></div>
<div class="a" style="left:24px;top:370px;width:219px;height:191px;overflow:hidden"><div class="a" style="left:-24px;top:-370px;width:1024px;height:829px"><span class="t" style="left:98px;top:389.0px;font-size:18px;line-height:24px;color:#2e3440;font-family:'Liberation Sans', sans-serif;transform:scaleX(1.0027);">BaseFramework.cpp</span></div></div>
<span class="t" style="left:74px;top:418.0px;font-size:18px;line-height:24px;color:#2e3440;font-family:'Liberation Sans', sans-serif;transform:scaleX(1.0081);">FaceDetection</span>
<span class="t" style="left:98px;top:447.0px;font-size:18px;line-height:24px;color:#2e3440;font-family:'Liberation Sans', sans-serif;transform:scaleX(1.0149);">Binaries</span>
<span class="t" style="left:98px;top:476.0px;font-size:18px;line-height:24px;color:#2e3440;font-family:'Liberation Sans', sans-serif;transform:scaleX(0.9993);">Includes</span>
<span class="t" style="left:98px;top:505.0px;font-size:18px;line-height:24px;color:#2e3440;font-family:'Liberation Sans', sans-serif;transform:scaleX(0.9991);">Debug</span>
<div class="a" style="left:24px;top:370px;width:219px;height:191px;overflow:hidden"><div class="a" style="left:-24px;top:-370px;width:1024px;height:829px"><span class="t" style="left:98px;top:534.0px;font-size:18px;line-height:24px;color:#2e3440;font-family:'Liberation Sans', sans-serif;transform:scaleX(1.0060);">FaceDetection.cpp</span></div></div>
<span class="t" style="left:50.5px;top:599.0px;font-size:18px;line-height:24px;color:#3c4052;font-family:'Liberation Sans', sans-serif;transform:scaleX(0.9996);">Problems</span>
<span class="t" style="left:162px;top:599.0px;font-size:18px;line-height:24px;color:#3c4052;font-family:'Liberation Sans', sans-serif;transform:scaleX(0.9779);">Tasks</span>
<span class="t" style="left:243px;top:599.0px;font-size:18px;line-height:24px;color:#262c44;font-family:'Liberation Sans', sans-serif;transform:scaleX(0.9841);">Console</span>
<span class="t" style="left:392px;top:599.0px;font-size:18px;line-height:24px;color:#3c4052;font-family:'Liberation Sans', sans-serif;transform:scaleX(1.0116);">Properties</span>
<span class="t" style="left:25px;top:634.5px;font-size:18px;line-height:24px;color:#33363f;font-family:'Liberation Sans', sans-serif;transform:scaleX(1.0578);">&lt;terminated&gt; OpticalFlow [C/C++ Application] OpticalFlow</span>
<span class="t" style="left:152px;top:708.5px;font-size:18px;line-height:24px;color:#33363f;font-family:'Liberation Sans', sans-serif;transform:scaleX(1.0067);">/FaceDetection/FaceDetection.cpp</span>
<span class="t" style="left:88px;top:764.0px;font-size:18px;line-height:24px;color:#dfdbd2;font-family:'Liberation Sans', sans-serif;transform:scaleX(1.0631);">cv.h (~/Desktop...</span>
<span class="t" style="left:282px;top:764.0px;font-size:18px;line-height:24px;color:#dfdbd2;font-family:'Liberation Sans', sans-serif;transform:scaleX(1.0243);">ubuntu@ubuntu:...</span>
<span class="t" style="left:476px;top:764.0px;font-size:18px;line-height:24px;color:#dfdbd2;font-family:'Liberation Sans', sans-serif;transform:scaleX(1.0015);">Sample_Video_...</span>
<span class="t" style="left:671px;top:764.0px;font-size:18px;line-height:24px;color:#dfdbd2;font-family:'Liberation Sans', sans-serif;transform:scaleX(1.0201);">C/C++ - FaceDe...</span>
<span class="t" style="left:11px;top:802.8px;font-size:14.5px;line-height:20.5px;color:#101828;font-family:'Liberation Sans', sans-serif;transform:scaleX(0.9105);">To direct input to this virtual machine, press Ctrl+G.</span>
<span class="t" style="left:893px;top:796.5px;font-size:23px;line-height:29px;color:#fff;font-family:'Liberation Sans', sans-serif;transform:scaleX(0.9920);font-weight:bold;letter-spacing:-1px">vm</span>
<span class="t" style="left:924.5px;top:796.5px;font-size:23px;line-height:29px;color:#fff;font-family:'Liberation Sans', sans-serif;transform:scaleX(0.8985);letter-spacing:-0.5px">ware</span>
<span class="t" style="left:968px;top:799.0px;font-size:6px;line-height:12px;color:#fff;font-family:'Liberation Sans', sans-serif;transform:scaleX(0.9046);">®</span>
</div>
</div></body></html>
